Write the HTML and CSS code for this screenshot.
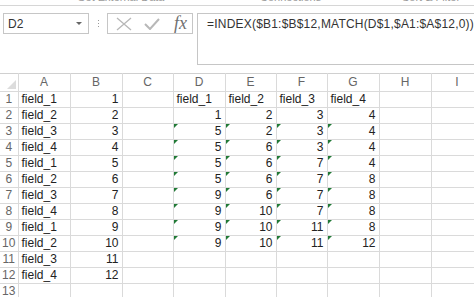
FILE: index.html
```html
<!DOCTYPE html>
<html lang="en">

<head>
    <meta charset="UTF-8">
    <title>Sheet1</title>
    <link rel="stylesheet" href="styles.css">
</head>

<body>
    <div class="ribbon">
        <span class="group-label label-data">Get External Data</span>
        <span class="group-label label-conn">Connections</span>
        <span class="group-label label-sort">Sort &amp; Filter</span>
    </div>

    <div class="formula-bar">
        <div class="name-box">
            <span>D2</span>
            <span class="drop-arrow"></span>
        </div>
        <div class="grip">
            <span></span><span></span><span></span>
        </div>
        <div class="fx-buttons">
            <svg width="16" height="14" viewBox="0 0 16 14">
                <path d="M1 1 L15 13 M15 1 L1 13" stroke="#b8b8b8" stroke-width="1.3" fill="none" />
            </svg>
            <svg width="16" height="12" viewBox="0 0 16 12">
                <path d="M1 6 L6 11 L15 1" stroke="#b8b8b8" stroke-width="2" fill="none" />
            </svg>
            <span class="fx">fx</span>
        </div>
        <div class="formula-box">=INDEX($B1:$B$12,MATCH(D$1,$A1:$A$12,0))</div>
    </div>

    <table class="sheet">
        <colgroup>
            <col class="c-head">
            <col class="c-wide"><col class="c-wide"><col class="c-norm"><col class="c-wide">
            <col class="c-norm"><col class="c-norm"><col class="c-wide"><col class="c-wide"><col class="c-wide">
        </colgroup>
        <thead>
            <tr>
                <th class="corner"><span class="corner-tri"></span></th>
                <th>A</th><th>B</th><th>C</th><th>D</th><th>E</th>
                <th>F</th><th>G</th><th>H</th><th>I</th>
            </tr>
        </thead>
        <tbody id="rows"></tbody>
    </table>

    <script>
        const colA = ['field_1', 'field_2', 'field_3', 'field_4', 'field_1', 'field_2',
            'field_3', 'field_4', 'field_1', 'field_2', 'field_3', 'field_4'];
        const lookup = [
            [1, 2, 3, 4], [5, 2, 3, 4], [5, 6, 3, 4], [5, 6, 7, 4], [5, 6, 7, 8],
            [9, 6, 7, 8], [9, 10, 7, 8], [9, 10, 11, 8], [9, 10, 11, 12]
        ];

        const body = document.getElementById('rows');
        for (let r = 1; r <= 13; r++) {
            const row = document.createElement('tr');
            let html = `<td class="row-num">${r}</td>`;
            html += r <= 12 ? `<td class="txt">${colA[r - 1]}</td><td class="num">${r}</td>` : '<td></td><td></td>';
            html += '<td></td>';
            for (let c = 0; c < 4; c++) {
                if (r === 1) {
                    html += `<td class="txt">field_${c + 1}</td>`;
                } else if (r <= 10) {
                    const flag = r >= 3 ? ' flag' : '';
                    html += `<td class="num${flag}">${lookup[r - 2][c]}</td>`;
                } else {
                    html += '<td></td>';
                }
            }
            html += '<td></td><td></td><td></td>';
            row.innerHTML = html;
            body.appendChild(row);
        }
    </script>
</body>

</html>
```

FILE: styles.css
```css
body {
    margin: 0;
    width: 474px;
    height: 297px;
    overflow: hidden;
    background: #fff;
    font-family: 'Liberation Sans', Arial, sans-serif;
    color: #222;
}

.ribbon {
    position: relative;
    height: 5px;
    border-bottom: 1px solid #d6d6d6;
    background: #fff;
    overflow: hidden;
}

.group-label {
    position: absolute;
    bottom: 2px;
    font-size: 11px;
    line-height: 11px;
    color: #9a9a9a;
}

.label-data { left: 77px; }
.label-conn { left: 260px; }
.label-sort { left: 402px; }

.formula-bar {
    display: flex;
    align-items: flex-start;
    padding-top: 7px;
    height: 52px;
}

.name-box {
    box-sizing: border-box;
    margin-left: 3px;
    width: 115px;
    height: 21px;
    border: 1px solid #c6c6c6;
    display: flex;
    align-items: center;
    justify-content: space-between;
    padding: 0 6px 0 4px;
    font-size: 12px;
    color: #333;
}

.drop-arrow {
    width: 0;
    height: 0;
    border-left: 3px solid transparent;
    border-right: 3px solid transparent;
    border-top: 3px solid #666;
}

.grip {
    width: 25px;
    height: 21px;
    display: flex;
    flex-direction: column;
    align-items: center;
    justify-content: center;
    gap: 2px;
}

.grip span {
    width: 1px;
    height: 1px;
    background: #9a9a9a;
}

.fx-buttons {
    box-sizing: border-box;
    width: 88px;
    height: 21px;
    border: 1px solid #c6c6c6;
    display: flex;
    align-items: center;
    padding: 0 5px 0 8px;
    gap: 12px;
}

.fx {
    margin-left: 2px;
    font-family: 'Liberation Serif', 'Times New Roman', serif;
    font-style: italic;
    font-size: 18px;
    color: #707070;
    line-height: 17px;
}

.formula-box {
    box-sizing: border-box;
    margin-left: 4px;
    flex: 1;
    height: 52px;
    border: 1px solid #c6c6c6;
    border-right: none;
    padding: 3px 0 0 9px;
    font-size: 12px;
    letter-spacing: 0.2px;
    color: #333;
    white-space: nowrap;
}

.sheet {
    margin-top: 8px;
    border-collapse: collapse;
    table-layout: fixed;
    width: 501px;
    font-size: 12px;
}

.c-head { width: 18px; }
.c-wide { width: 52px; }
.c-norm { width: 51px; }

.sheet th,
.sheet td {
    border: 1px solid #dadada;
    padding: 0;
    height: 15px;
    line-height: 15px;
    white-space: nowrap;
    overflow: hidden;
}

.sheet th {
    height: 17px;
    font-weight: normal;
    color: #666;
    border-top-color: #d0d0d0;
}

.sheet tr > :first-child {
    border-left: none;
}

.corner {
    position: relative;
}

.corner-tri {
    position: absolute;
    right: 2px;
    bottom: 2px;
    width: 0;
    height: 0;
    border-left: 9px solid transparent;
    border-bottom: 9px solid #dcdcdc;
}

.row-num {
    text-align: center;
    color: #666;
}

.txt {
    padding-left: 3px !important;
}

.num {
    text-align: right;
    padding-right: 3px !important;
}

.flag {
    position: relative;
}

.flag::before {
    content: '';
    position: absolute;
    top: 0;
    left: 0;
    width: 0;
    height: 0;
    border-top: 4px solid #217a36;
    border-right: 4px solid transparent;
}
```
